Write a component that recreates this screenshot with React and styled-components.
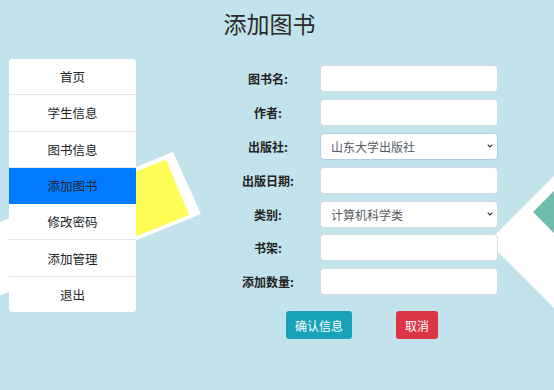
import React from "react";
import styled, { createGlobalStyle } from "styled-components";

const Global = createGlobalStyle`
  html, body { margin: 0; padding: 0; }
  body {
    background: #c2e2ec;
    font-family: "Noto Sans CJK SC", "Noto Sans", sans-serif;
    color: #212529;
  }
`;

const Page = styled.div`
  position: relative;
  width: 554px;
  height: 390px;
  overflow: hidden;
  background: #c2e2ec;
`;

const Deco = styled.svg`
  position: absolute;
  left: 0;
  top: 0;
  z-index: 0;
`;

const Content = styled.div`
  position: relative;
  z-index: 1;
`;

const Title = styled.h1`
  margin: 0;
  padding: 8px 15px 0 0;
  height: 30px;
  line-height: 30px;
  text-align: center;
  font-size: 23px;
  font-weight: 400;
  color: #2b2b2b;
`;

const Main = styled.div`
  display: flex;
  align-items: flex-start;
  margin-top: 21px;
  padding-left: 9px;
`;

const Sidebar = styled.nav`
  width: 127px;
  background: #fff;
  border-radius: 4px;
  overflow: hidden;
  display: flex;
  flex-direction: column;
`;

const NavItem = styled.div`
  height: 35.3px;
  display: flex;
  align-items: center;
  justify-content: center;
  font-size: 12.5px;
  color: #212529;
  background: ${(p) => (p.$active ? "#007bff" : "#fff")};
  border-bottom: 1px solid ${(p) => (p.$active ? "#007bff" : "#e8e8e8")};
  &:last-child { border-bottom: none; }
`;

const Form = styled.form`
  margin-left: 84px;
  margin-top: 6px;
  display: flex;
  flex-direction: column;
`;

const Fields = styled.div`
  display: grid;
  grid-template-columns: 96px 178px;
  grid-auto-rows: 26.9px;
  column-gap: 4px;
  row-gap: 7px;
  align-items: center;
`;

const Label = styled.label`
  text-align: center;
  font-size: 12px;
  font-weight: 700;
  color: #222;
`;

const Input = styled.input`
  box-sizing: border-box;
  width: 100%;
  height: 100%;
  border: 1px solid #d3dbe1;
  border-radius: 4px;
  background: #fff;
  outline: none;
  font-family: inherit;
`;

const SelectWrap = styled.div`
  position: relative;
  height: 100%;
`;

const Select = styled.select`
  box-sizing: border-box;
  width: 100%;
  height: 100%;
  appearance: none;
  -webkit-appearance: none;
  border: 1px solid ${(p) => (p.$focus ? "#a9cdea" : "#d3dbe1")};
  border-radius: 4px;
  background: #fff;
  padding: 0 0 0 10px;
  font-family: inherit;
  font-size: 12px;
  color: #555c63;
  outline: none;
`;

const Chevron = styled.svg`
  position: absolute;
  right: 5px;
  top: 50%;
  margin-top: -2px;
  pointer-events: none;
`;

const Buttons = styled.div`
  display: flex;
  gap: 44px;
  padding-left: 66px;
  margin-top: 16px;
`;

const Button = styled.button`
  height: 28px;
  padding: 0 9px;
  border: none;
  border-radius: 3px;
  font-family: inherit;
  font-size: 12px;
  color: #fff;
  background: ${(p) => (p.$variant === "danger" ? "#dc3545" : "#17a2b8")};
`;

const navs = ["首页", "学生信息", "图书信息", "添加图书", "修改密码", "添加管理", "退出"];

function Arrow() {
  return (
    <Chevron width="6" height="4" viewBox="0 0 6 4">
      <path d="M0.7 0.7 L3 3 L5.3 0.7" fill="none" stroke="#333" strokeWidth="1.1" />
    </Chevron>
  );
}

export default function App() {
  return (
    <Page>
      <Global />
      <Deco width="554" height="390" viewBox="0 0 554 390">
        <polygon points="173,152 201,214 -31,308 -59,246" fill="#ffffff" />
        <polygon points="166,159.5 189,215 50,271 27,215.5" fill="#fefd55" />
        <polygon points="488,242 600,130 712,242 600,354" fill="#ffffff" />
        <polygon points="533,212 583,162 633,212 583,262" fill="#6dbdaf" />
      </Deco>
      <Content>
        <Title>添加图书</Title>
        <Main>
          <Sidebar>
            {navs.map((n) => (
              <NavItem key={n} $active={n === "添加图书"}>
                {n}
              </NavItem>
            ))}
          </Sidebar>
          <Form onSubmit={(e) => e.preventDefault()}>
            <Fields>
              <Label>图书名:</Label>
              <Input />
              <Label>作者:</Label>
              <Input />
              <Label>出版社:</Label>
              <SelectWrap>
                <Select $focus defaultValue="山东大学出版社">
                  <option>山东大学出版社</option>
                </Select>
                <Arrow />
              </SelectWrap>
              <Label>出版日期:</Label>
              <Input />
              <Label>类别:</Label>
              <SelectWrap>
                <Select defaultValue="计算机科学类">
                  <option>计算机科学类</option>
                </Select>
                <Arrow />
              </SelectWrap>
              <Label>书架:</Label>
              <Input />
              <Label>添加数量:</Label>
              <Input />
            </Fields>
            <Buttons>
              <Button type="button">确认信息</Button>
              <Button type="button" $variant="danger">取消</Button>
            </Buttons>
          </Form>
        </Main>
      </Content>
    </Page>
  );
}
